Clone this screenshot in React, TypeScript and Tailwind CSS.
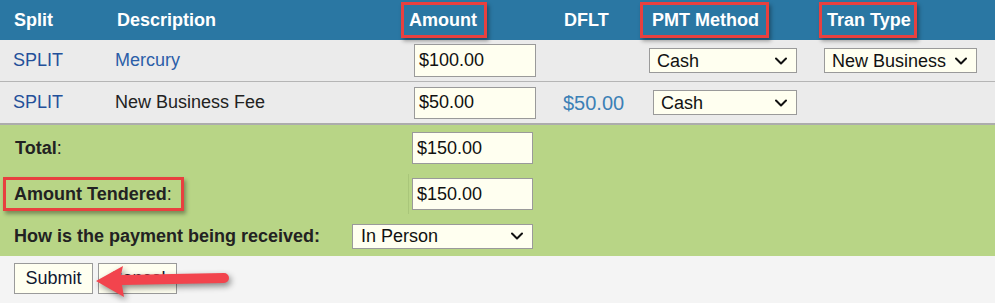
import React from 'react';

// Payment split form: header bar, split rows, green totals panel, action buttons.

const redBox = 'border-[3px] border-[#e8403f] shadow-[2px_3px_4px_rgba(0,0,0,0.35)]';

function Chevron() {
  return (
    <svg width="12" height="8" viewBox="0 0 12 8" fill="none" stroke="#111" strokeWidth={2}>
      <path d="M1 1.5 L6 6.5 L11 1.5" strokeLinecap="round" strokeLinejoin="round" />
    </svg>
  );
}

function FakeSelect({ value, className }: { value: string; className: string }) {
  return (
    <div
      className={`flex items-center justify-between border border-[#9a9a9a] bg-[#fffff0] pl-[7px] pr-[9px] text-[#111] leading-[20px] ${className}`}
    >
      <span>{value}</span>
      <Chevron />
    </div>
  );
}

function MoneyInput({ value, className }: { value: string; className: string }) {
  return (
    <div className={`flex items-center border border-[#9a9a9a] bg-[#fffff0] pl-[4px] text-[#111] ${className}`}>
      {value}
    </div>
  );
}

export default function App() {
  const cols = 'grid grid-cols-[102px_294px_154px_84px_175px_1fr] items-center pl-[13px]';

  return (
    <div className="w-[995px] h-[303px] overflow-hidden bg-[#f4f4f4] font-['Liberation_Sans',Arial,sans-serif] text-[18px] text-[#222]">
      {/* header */}
      <div className={`${cols} h-[40px] bg-[#2a77a3] font-bold text-white leading-[20px]`}>
        <span className="ml-[1px]">Split</span>
        <span className="ml-[2px]">Description</span>
        <span className={`-ml-[8px] w-fit pl-[5px] pr-[7px] py-[5px] ${redBox}`}>Amount</span>
        <span className="ml-[1px]">DFLT</span>
        <span className={`-ml-[7px] w-fit pl-[9px] pr-[7px] py-[5px] ${redBox}`}>PMT Method</span>
        <span className={`-ml-[3px] w-fit pl-[5px] pr-[3px] py-[5px] ${redBox}`}>Tran Type</span>
      </div>

      {/* rows */}
      <div className={`${cols} h-[42px] bg-[#ebebeb] border-b border-[#b5b5b5]`}>
        <span className="text-[#23509a]">SPLIT</span>
        <span className="text-[#2b5ea8]">Mercury</span>
        <MoneyInput value="$100.00" className="ml-[5px] w-[122px] h-[33px]" />
        <span />
        <FakeSelect value="Cash" className="ml-[2px] w-[148px] h-[25px]" />
        <FakeSelect value="New Business" className="ml-[2px] w-[153px] h-[25px]" />
      </div>
      <div className={`${cols} h-[43px] bg-[#ebebeb] border-b-2 border-[#acacac]`}>
        <span className="text-[#23509a]">SPLIT</span>
        <span>New Business Fee</span>
        <MoneyInput value="$50.00" className="ml-[5px] w-[122px] h-[32px]" />
        <span className="text-[20px] text-[#3c80b6]">$50.00</span>
        <FakeSelect value="Cash" className="ml-[6px] w-[144px] h-[25px]" />
        <span />
      </div>

      {/* totals */}
      <div className="flex h-[131px] flex-col gap-[14px] bg-[#b8d586] pl-[14px] pt-[7px] font-bold text-[#222]">
        <div className="flex h-[32px] items-center">
          <span className="ml-[1px] w-[397px]">
            Total<span className="font-normal">:</span>
          </span>
          <MoneyInput value="$150.00" className="w-[121px] h-[32px] font-normal" />
        </div>
        <div className="flex h-[32px] items-center">
          <div className="w-[394px]">
            <span className={`-ml-[11px] inline-block pl-[8px] pr-[9px] py-[4px] leading-[20px] ${redBox}`}>
              Amount Tendered<span className="font-normal">:</span>
            </span>
          </div>
          <div className="-my-[4px] h-[40px] w-px bg-[#a9c67a]" />
          <MoneyInput value="$150.00" className="ml-[3px] w-[121px] h-[32px] font-normal" />
        </div>
        <div className="flex h-[24px] items-center">
          <span className="w-[338px]">How is the payment being received:</span>
          <FakeSelect value="In Person" className="w-[181px] h-[25px] pl-[8px] font-normal" />
        </div>
      </div>

      {/* actions */}
      <div className="relative flex h-[47px] gap-[5px] pl-[14px] pt-[7px]">
        <button className="h-[31px] w-[79px] border border-[#9a9a9a] bg-[#fffff0] text-[#101830]">Submit</button>
        <button className="h-[31px] w-[79px] border border-[#9a9a9a] bg-[#fffff0] text-[#101830]">Cancel</button>
        <svg
          className="absolute left-0 top-0 drop-shadow-[2px_3px_3px_rgba(0,0,0,0.45)]"
          width="250"
          height="47"
          viewBox="0 0 250 47"
        >
          <path d="M96 25 L123 10 L121 19 L224 17 A5 5 0 0 1 224 27 L122 29 L124 41 Z" fill="#f2444d" />
        </svg>
      </div>
    </div>
  );
}
